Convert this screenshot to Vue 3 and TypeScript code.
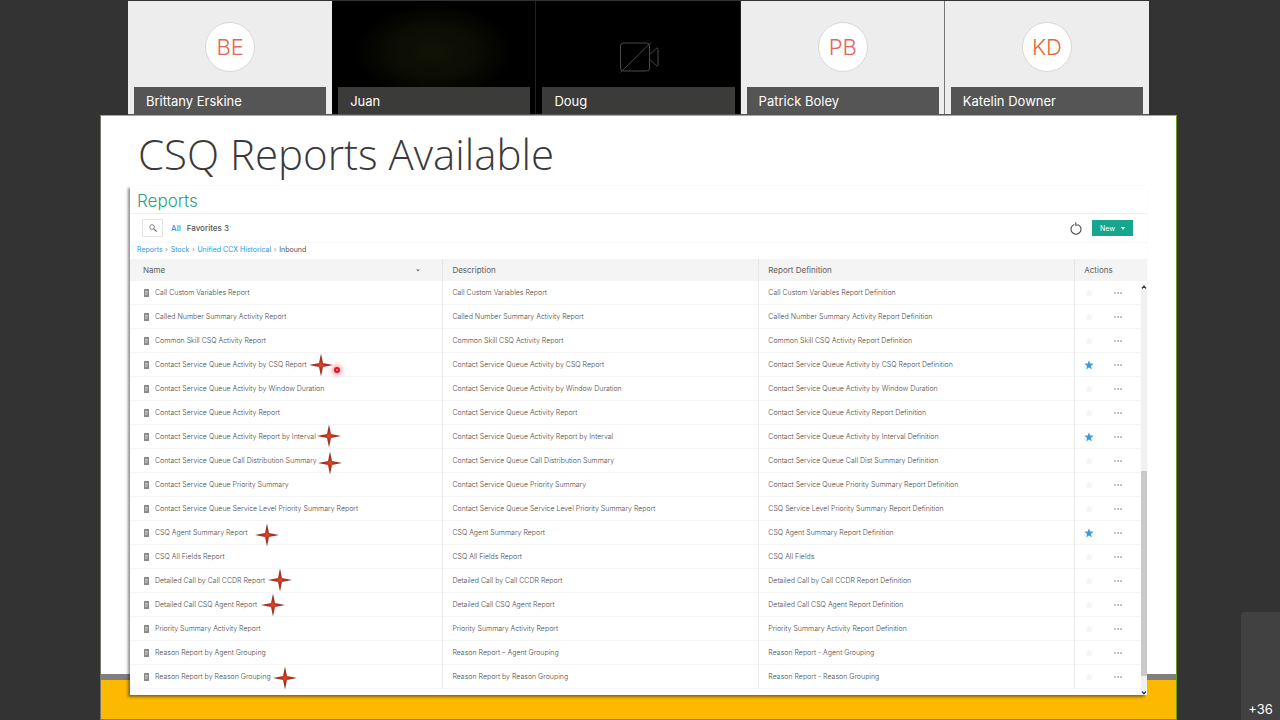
<script setup lang="ts">
interface Participant {
  name: string
  initials?: string
  tone: string
  camera?: boolean
}

interface Report {
  name: string
  description?: string
  definition: string
  favorite?: boolean
}

interface Point {
  x: number
  y: number
}

const participants: Participant[] = [
  { name: 'Brittany Erskine', initials: 'BE', tone: 'light' },
  { name: 'Juan', tone: 'video' },
  { name: 'Doug', tone: 'dark', camera: true },
  { name: 'Patrick Boley', initials: 'PB', tone: 'light' },
  { name: 'Katelin Downer', initials: 'KD', tone: 'light orange' },
]

const reports: Report[] = [
  { name: 'Call Custom Variables Report', definition: 'Call Custom Variables Report Definition' },
  { name: 'Called Number Summary Activity Report', definition: 'Called Number Summary Activity Report Definition' },
  { name: 'Common Skill CSQ Activity Report', definition: 'Common Skill CSQ Activity Report Definition' },
  { name: 'Contact Service Queue Activity by CSQ Report', definition: 'Contact Service Queue Activity by CSQ Report Definition', favorite: true },
  { name: 'Contact Service Queue Activity by Window Duration', definition: 'Contact Service Queue Activity by Window Duration' },
  { name: 'Contact Service Queue Activity Report', definition: 'Contact Service Queue Activity Report Definition' },
  { name: 'Contact Service Queue Activity Report by Interval', definition: 'Contact Service Queue Activity by Interval Definition', favorite: true },
  { name: 'Contact Service Queue Call Distribution Summary', definition: 'Contact Service Queue Call Dist Summary Definition' },
  { name: 'Contact Service Queue Priority Summary', definition: 'Contact Service Queue Priority Summary Report Definition' },
  { name: 'Contact Service Queue Service Level Priority Summary Report', definition: 'CSQ Service Level Priority Summary Report Definition' },
  { name: 'CSQ Agent Summary Report', definition: 'CSQ Agent Summary Report Definition', favorite: true },
  { name: 'CSQ All Fields Report', definition: 'CSQ All Fields' },
  { name: 'Detailed Call by Call CCDR Report', definition: 'Detailed Call by Call CCDR Report Definition' },
  { name: 'Detailed Call CSQ Agent Report', definition: 'Detailed Call CSQ Agent Report Definition' },
  { name: 'Priority Summary Activity Report', definition: 'Priority Summary Activity Report Definition' },
  { name: 'Reason Report by Agent Grouping', description: 'Reason Report – Agent Grouping', definition: 'Reason Report - Agent Grouping' },
  { name: 'Reason Report by Reason Grouping', definition: 'Reason Report - Reason Grouping' },
]

/* Centres of the hand-placed star marks, measured from the panel's corner. */
const marks: Point[] = [
  { x: 191, y: 179 },
  { x: 199, y: 250 },
  { x: 200, y: 277 },
  { x: 137, y: 349 },
  { x: 150, y: 394 },
  { x: 143, y: 419 },
  { x: 155, y: 492 },
]
const pointer: Point = { x: 207, y: 184 }

const place = (p: Point) => ({ left: `${p.x}px`, top: `${p.y}px` })
</script>

<template>
  <div class="meeting">
    <header class="strip">
      <div v-for="p in participants" :key="p.name" class="tile" :class="p.tone">
        <div class="face">
          <span v-if="p.initials" class="avatar">{{ p.initials }}</span>
          <svg v-if="p.camera" class="camera" viewBox="0 0 40 32" width="40" height="32" fill="none" stroke="#4a4a4a">
            <rect x="1.5" y="2" width="29" height="28" rx="3" />
            <path d="M31 13.5l6-6c1-.6 2-.3 2 1v15c0 1.300-1 1.600-2 1l-6-6M1.500 31.500L32 1.500" />
          </svg>
        </div>
        <div class="label">{{ p.name }}</div>
      </div>
    </header>

    <main class="slide">
      <h1>CSQ Reports Available</h1>
      <section class="panel">
        <h2>Reports</h2>
        <div class="toolbar">
          <button class="search" aria-label="Search">
            <svg viewBox="0 0 10 10" width="8" height="8" fill="none" stroke="#666"><circle cx="3.800" cy="3.800" r="2.900" /><path d="M6 6l3.500 3.500" stroke-width="1.400" /></svg>
          </button>
          <button class="tab active">All</button>
          <button class="tab">Favorites 3</button>
          <button class="refresh" aria-label="Refresh">
            <svg viewBox="0 0 12 13" width="12" height="13" fill="none" stroke="#4c4c4c" stroke-width="1.100"><path d="M4.300 2.500A5 5 0 1 0 7.700 2.500" /><path d="M5.800 .300V3.300H7.800" /></svg>
          </button>
          <button class="new">New <svg viewBox="0 0 4 3" width="4" height="3"><path d="M0 0h4L2 3z" fill="#fff" /></svg></button>
        </div>
        <nav class="crumbs">
          <a href="#">Reports</a><i>›</i><a href="#">Stock</a><i>›</i><a href="#">Unified CCX Historical</a><i>›</i><span>Inbound</span>
        </nav>
        <div class="grid">
          <table>
            <colgroup><col class="c-name" /><col class="c-text" /><col class="c-text" /><col class="c-act" /></colgroup>
            <thead>
              <tr>
                <th><div class="sort">Name <svg viewBox="0 0 4 3" width="4" height="3"><path d="M0 .5h4L2 2.500z" fill="#777" /></svg></div></th>
                <th>Description</th>
                <th>Report Definition</th>
                <th>Actions</th>
              </tr>
            </thead>
            <tbody>
              <tr v-for="r in reports" :key="r.name">
                <td>
                  <div class="name">
                    <svg viewBox="0 0 5 8" width="5" height="8"><path fill="#8a8a8a" d="M0 0h5v8H0z" /><path stroke="#ddd" stroke-width=".7" d="M1 2.500h3M1 4h3M1 5.500h2" /></svg>
                    {{ r.name }}
                  </div>
                </td>
                <td>{{ r.description ?? r.name }}</td>
                <td>{{ r.definition }}</td>
                <td>
                  <div class="actions">
                    <button :class="['fav', { on: r.favorite }]" :aria-label="'Favorite ' + r.name">
                      <svg viewBox="0 0 10 10" width="10" height="10"><path d="M5 .3l1.200 3.300 3.500.1-2.800 2.200 1 3.500L5 7.400 2.100 9.400l1-3.500L.3 3.700l3.500-.1z" /></svg>
                    </button>
                    <button class="more" :aria-label="'Actions for ' + r.name">
                      <svg viewBox="0 0 8 2" width="8" height="2" fill="#777"><circle cx="1" cy="1" r=".8" /><circle cx="4" cy="1" r=".8" /><circle cx="7" cy="1" r=".8" /></svg>
                    </button>
                  </div>
                </td>
              </tr>
            </tbody>
          </table>
          <div class="scroll">
            <svg viewBox="0 0 6 4" width="6" height="4" fill="none" stroke="#333" stroke-width="1.300"><path d="M1 3.500L3 1.200l2 2.300" /></svg>
            <div class="track"><div class="thumb"></div></div>
            <svg viewBox="0 0 6 4" width="6" height="4" fill="none" stroke="#333" stroke-width="1.300"><path d="M1 .5L3 2.800 5 .5" /></svg>
          </div>
        </div>
        <svg v-for="(m, i) in marks" :key="i" class="mark" :style="place(m)" viewBox="0 0 24 24" width="24" height="24">
          <defs>
            <radialGradient :id="'mark' + i"><stop offset="0" stop-color="#e04a2c" /><stop offset=".3" stop-color="#b53420" /><stop offset="1" stop-color="#7c3026" /></radialGradient>
          </defs>
          <path :fill="`url(#mark${i})`" d="M12 .5L14 10 24 12l-10 2L12 23.500 10 14 0 12l10-2z" />
        </svg>
        <span class="laser" :style="place(pointer)"></span>
      </section>
    </main>

    <aside class="overflow">+36</aside>
  </div>
</template>

<style>
body {
  margin: 0;
  background: #333;
}
</style>

<style scoped>
.meeting {
  position: relative;
  box-sizing: border-box;
  min-height: 100vh;
  padding: 1px 103px 0 100px;
  background: #333;
  font-family: Inter, "Liberation Sans", sans-serif;
}
.strip {
  display: flex;
  margin: 0 28px;
  border-bottom: 1px solid #555;
}
.tile {
  flex: 1;
  display: flex;
  flex-direction: column;
  height: 113px;
  box-sizing: border-box;
  padding: 0 5px 0 6px;
  border-right: 1px solid #777;
  background: #ededed;
}
.tile.dark,
.tile.video {
  background: #000;
  border-right-color: #222;
}
.tile.video {
  background: radial-gradient(ellipse at 50% 45%, #111305 0, #0b0c03 30%, #000 55%);
}
.tile:first-child,
.tile:last-child {
  border-right-color: #ededed;
}
.face {
  flex: 1;
  display: flex;
  justify-content: center;
  align-items: center;
}
.avatar {
  width: 48px;
  height: 48px;
  margin-top: 6px;
  border: 1px solid #d8d8d8;
  border-radius: 50%;
  background: #fff;
  color: #e0685c;
  font-size: 22px;
  font-weight: 300;
  line-height: 48px;
  text-align: center;
}
.orange .avatar {
  color: #e5683a;
}
.camera {
  margin-top: 25px;
}
.label {
  height: 27px;
  padding-left: 12px;
  background: #555;
  color: #fff;
  font-size: 13px;
  line-height: 28px;
}
.dark .label,
.video .label {
  background: #3b3b3a;
}
.slide {
  box-sizing: border-box;
  padding: 0 29px 24px 29px;
  border: 1px solid #6b9a1c;
  border-top-color: #a5ad83;
  border-left-color: #777668;
  border-bottom-color: #8a7a3a;
  background: linear-gradient(to top, #fdb900 39px, #7f7f7f 39px, #7f7f7f 45px, #fff 45px);
}
h1 {
  margin: 0;
  height: 70px;
  padding-left: 8px;
  color: #3a3a3a;
  font-family: "Open Sans", "Noto Sans", sans-serif;
  font-size: 42px;
  font-weight: 300;
  line-height: 76px;
  white-space: nowrap;
}
.panel {
  position: relative;
  background: #fff;
  box-shadow: -2px 2px 3px rgba(0, 0, 0, 0.45);
  border-radius: 0 0 3px 0;
}
h2 {
  margin: 0;
  height: 27px;
  padding-left: 7px;
  border-bottom: 1px solid #f0f0f0;
  color: #2ca083;
  font-size: 17px;
  font-weight: 300;
  line-height: 30px;
}
button {
  display: flex;
  align-items: center;
  justify-content: center;
  padding: 0;
  border: 0;
  background: none;
  font: inherit;
  color: inherit;
}
.toolbar {
  display: flex;
  align-items: center;
  height: 28px;
  padding: 0 14px 0 12px;
  border-bottom: 1px solid #f7f7f7;
  color: #555;
  font-size: 8px;
}
.search {
  width: 21px;
  height: 18px;
  margin-right: 8px;
  border: 1px solid #e4e4e4;
}
.tab {
  margin-right: 6px;
  font-weight: 500;
}
.active {
  color: #2f97dc;
}
.refresh {
  margin-left: auto;
  margin-right: 10px;
}
.new {
  gap: 6px;
  width: 41px;
  height: 16px;
  background: #17a68d;
  color: #fff;
  font-size: 7px;
}
.crumbs {
  display: flex;
  height: 16px;
  padding-left: 7px;
  color: #555;
  font-size: 7px;
  line-height: 14px;
}
.crumbs a {
  color: #2f97dc;
  text-decoration: none;
}
.crumbs i {
  width: 8px;
  text-align: center;
  font-style: normal;
  color: #999;
}
.grid {
  display: flex;
  background: linear-gradient(#f4f4f4 22px, #fff 22px);
}
table {
  flex: 1;
  table-layout: fixed;
  border-collapse: separate;
  border-spacing: 0;
  margin-bottom: 6px;
  color: #4c4c4c;
  font-size: 7px;
  font-weight: 300;
}
.c-name {
  width: 30.9%;
}
.c-text {
  width: 31.25%;
}
.c-act {
  width: 6.6%;
}
th {
  height: 22px;
  padding: 0 0 0 9px;
  border-left: 1px solid #e6e6e6;
  color: #5c5c5c;
  font-size: 8px;
  font-weight: 400;
  text-align: left;
}
td {
  box-sizing: border-box;
  height: 24px;
  padding: 0 0 0 9px;
  border-left: 1px solid #ececec;
  border-bottom: 1px solid #f6f6f6;
  white-space: nowrap;
}
th:first-child,
td:first-child {
  padding-left: 13px;
  border-left: 0;
}
.sort {
  display: flex;
  align-items: center;
  justify-content: space-between;
  padding-right: 22px;
}
.name {
  display: flex;
  align-items: center;
  gap: 6px;
  padding-left: 1px;
}
.actions {
  display: flex;
  align-items: center;
  gap: 20px;
}
.fav {
  fill: #f5f5f5;
}
.fav.on {
  fill: #3d9bdc;
}
.scroll {
  display: flex;
  flex-direction: column;
  align-items: center;
  width: 6px;
  padding-top: 26px;
}
.track {
  flex: 1;
  display: flex;
  align-items: flex-end;
  width: 6px;
  padding-bottom: 15px;
  background: #f1f1f1;
}
.thumb {
  width: 6px;
  height: 53%;
  background: #c9c9c9;
}
.mark {
  position: absolute;
  transform: translate(-50%, -50%);
}
.laser {
  position: absolute;
  width: 2px;
  height: 2px;
  border: 2px solid #e60f28;
  border-radius: 50%;
  background: #f99;
  box-shadow: 0 0 5px 2px rgba(255, 60, 80, 0.5);
  transform: translate(-50%, -50%);
}
.overflow {
  position: absolute;
  right: 0;
  bottom: 0;
  display: flex;
  align-items: flex-end;
  justify-content: center;
  box-sizing: border-box;
  width: 39px;
  height: 108px;
  padding-bottom: 3px;
  border-radius: 3px 0 0 0;
  background: #414141;
  color: #fff;
  font-size: 13px;
}
</style>
